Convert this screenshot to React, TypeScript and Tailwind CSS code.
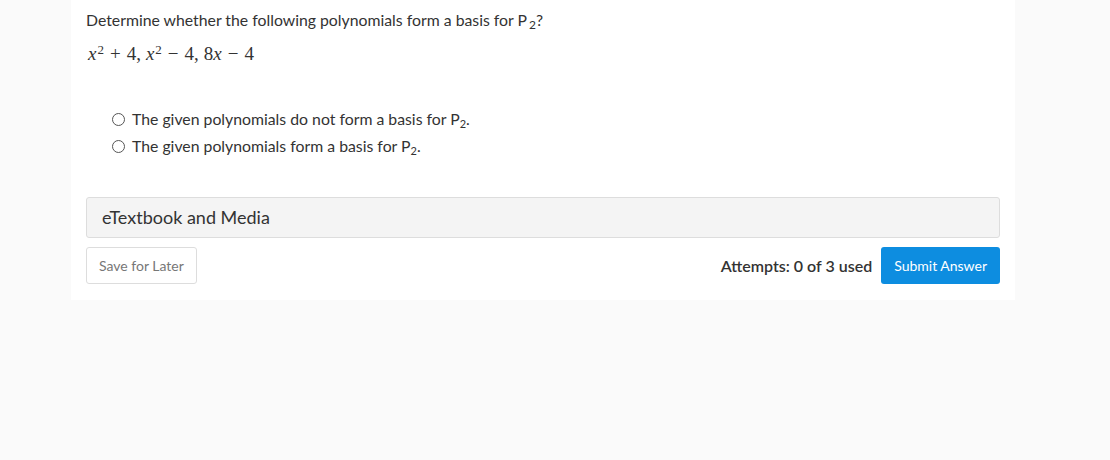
import React from "react";

function Radio() {
  return (
    <span className="inline-block w-[13px] h-[13px] rounded-full border border-[#555] bg-white shrink-0" />
  );
}

function Op({ c }: { c: string }) {
  return <span className="mx-[6px]">{c}</span>;
}

function X2() {
  return (
    <span>
      <i>x</i>
      <sup className="text-[13px] ml-[1px]">2</sup>
    </span>
  );
}

export default function App() {
  return (
    <div className="min-h-[460px] bg-[#fafafa] font-['Lato','Noto_Sans',sans-serif]">
      <div className="ml-[71px] w-[944px] bg-white px-[15px] pt-[10px] pb-[16px]">
        <div className="text-[15.8px] leading-[20px] text-[#333]">
          Determine whether the following polynomials form a basis for{" "}
          <span>P</span>
          <sub className="text-[12px] ml-[2px]">2</sub>?
        </div>
        <div className="mt-[13px] font-['Liberation_Serif',serif] text-[19px] leading-[22px] text-[#333] pl-[2px] whitespace-nowrap">
          <X2 />
          <Op c="+" />
          4,
          <span className="ml-[5px]" />
          <X2 />
          <Op c="−" />
          4,
          <span className="ml-[5px]" />
          8<i>x</i>
          <Op c="−" />
          4
        </div>
        <div className="mt-[44px] pl-[26px] flex flex-col gap-[7px] text-[15.8px] text-[#333]">
          <label className="flex items-center gap-[7px] leading-[20px]">
            <Radio />
            <span>
              The given polynomials do not form a basis for P<sub className="text-[11px]">2</sub>.
            </span>
          </label>
          <label className="flex items-center gap-[7px] leading-[20px]">
            <Radio />
            <span>
              The given polynomials form a basis for P<sub className="text-[11px]">2</sub>.
            </span>
          </label>
        </div>
        <div className="mt-[41px] h-[41px] border border-[#ddd] rounded-[3px] bg-[#f4f4f4] flex items-center px-[15px] text-[18px] text-[#333]">
          eTextbook and Media
        </div>
        <div className="mt-[9px] flex items-center justify-between">
          <button className="h-[37px] px-[12px] border border-[#ddd] rounded-[3px] bg-white text-[14px] text-[#777]">
            Save for Later
          </button>
          <div className="flex items-center gap-[9px]">
            <span className="text-[16px] font-semibold text-[#333]">Attempts: 0 of 3 used</span>
            <button className="h-[37px] px-[13px] rounded-[3px] bg-[#0d8de0] text-[14px] text-white">
              Submit Answer
            </button>
          </div>
        </div>
      </div>
    </div>
  );
}
